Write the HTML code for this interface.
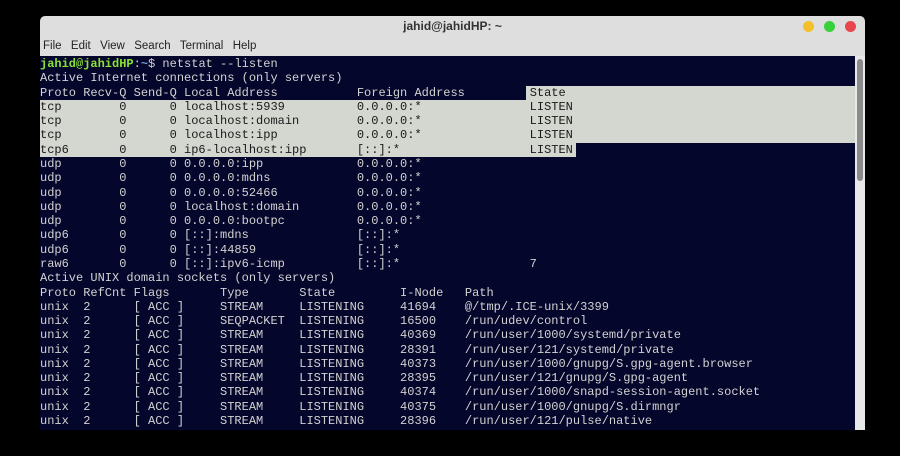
<!DOCTYPE html>
<html><head><meta charset="utf-8"><style>
body{margin:0;width:900px;height:456px;background:#000;position:relative;overflow:hidden;font-family:"Liberation Sans",sans-serif}
.win{position:absolute;left:40px;top:16px;width:825px;height:414px;background:#dedede;border-radius:5px 5px 0 0}
.title{position:absolute;left:0;right:0;top:3px;text-align:center;font-weight:bold;font-size:12px;color:#333}
.dot{position:absolute;top:5px;width:11px;height:11px;border-radius:50%}
.menu{position:absolute;left:3px;top:24px;font-size:11.5px;color:#222;word-spacing:1.5px}
.term{position:absolute;left:0;top:40px;width:815px;height:374px;background:#05062b;overflow:hidden}
.sb{position:absolute;left:815px;top:40px;width:10px;height:374px;background:#e8e8e8}
.thumb{position:absolute;left:2px;top:3px;width:6px;height:122px;background:#8a8a8a;border-radius:3px}
pre{margin:0;position:absolute;left:0;top:1px;font-family:"Liberation Mono",monospace;font-size:12px;line-height:14.28px;color:#d2d2d2}
.sel{position:absolute;background:#d4d6d0;height:14.28px}
.g{color:#8ae234;font-weight:bold}.b{color:#729fcf;font-weight:bold}
.d{color:#1a1a1a}
</style></head><body>
<div class="win">
<div class="title">jahid@jahidHP: ~</div>
<div class="dot" style="left:763px;background:#f4bf2c"></div>
<div class="dot" style="left:784px;background:#39d13a"></div>
<div class="dot" style="left:805px;background:#e8454c"></div>
<div class="menu">File&nbsp; Edit&nbsp; View&nbsp; Search&nbsp; Terminal&nbsp; Help</div>
<div class="term">
<div class="sel" style="left:486px;width:329px;top:29.56px"></div>
<div class="sel" style="left:0;width:815px;top:43.84px;height:42.84px"></div>
<div class="sel" style="left:0;width:536px;top:86.68px"></div>
<pre><span class="g">jahid@jahidHP</span>:<span class="b">~</span>$ netstat --listen
Active Internet connections (only servers)
Proto Recv-Q Send-Q Local Address           Foreign Address         <span class="d">State</span>
<span class="d">tcp        0      0 localhost:5939          0.0.0.0:*               LISTEN</span>
<span class="d">tcp        0      0 localhost:domain        0.0.0.0:*               LISTEN</span>
<span class="d">tcp        0      0 localhost:ipp           0.0.0.0:*               LISTEN</span>
<span class="d">tcp6       0      0 ip6-localhost:ipp       [::]:*                  LISTEN</span>
udp        0      0 0.0.0.0:ipp             0.0.0.0:*
udp        0      0 0.0.0.0:mdns            0.0.0.0:*
udp        0      0 0.0.0.0:52466           0.0.0.0:*
udp        0      0 localhost:domain        0.0.0.0:*
udp        0      0 0.0.0.0:bootpc          0.0.0.0:*
udp6       0      0 [::]:mdns               [::]:*
udp6       0      0 [::]:44859              [::]:*
raw6       0      0 [::]:ipv6-icmp          [::]:*                  7
Active UNIX domain sockets (only servers)
Proto RefCnt Flags       Type       State         I-Node   Path
unix  2      [ ACC ]     STREAM     LISTENING     41694    @/tmp/.ICE-unix/3399
unix  2      [ ACC ]     SEQPACKET  LISTENING     16500    /run/udev/control
unix  2      [ ACC ]     STREAM     LISTENING     40369    /run/user/1000/systemd/private
unix  2      [ ACC ]     STREAM     LISTENING     28391    /run/user/121/systemd/private
unix  2      [ ACC ]     STREAM     LISTENING     40373    /run/user/1000/gnupg/S.gpg-agent.browser
unix  2      [ ACC ]     STREAM     LISTENING     28395    /run/user/121/gnupg/S.gpg-agent
unix  2      [ ACC ]     STREAM     LISTENING     40374    /run/user/1000/snapd-session-agent.socket
unix  2      [ ACC ]     STREAM     LISTENING     40375    /run/user/1000/gnupg/S.dirmngr
unix  2      [ ACC ]     STREAM     LISTENING     28396    /run/user/121/pulse/native</pre>
</div>
<div class="sb"><div class="thumb"></div></div>
</div>
</body></html>
